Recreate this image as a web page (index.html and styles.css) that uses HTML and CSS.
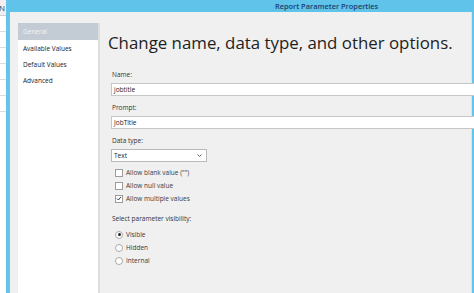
FILE: index.html
```html
<!DOCTYPE html>
<html lang="en">

<head>
    <meta charset="UTF-8">
    <meta name="viewport" content="width=device-width, initial-scale=1.0">
    <title>Report Parameter Properties</title>
    <link rel="stylesheet" href="styles.css">
</head>

<body>
    <div class="screen">
        <!-- window behind the dialog -->
        <div class="behind">
            <div class="behind-top">N</div>
            <div class="behind-row"></div>
            <div class="behind-row"></div>
            <div class="behind-row"></div>
            <div class="behind-row"></div>
            <div class="behind-row"></div>
            <div class="behind-row"></div>
        </div>

        <div class="window">
            <div class="titlebar">Report Parameter Properties</div>
            <div class="client">
                <ul class="nav">
                    <li class="active">General</li>
                    <li>Available Values</li>
                    <li>Default Values</li>
                    <li>Advanced</li>
                </ul>

                <div class="page">
                    <h1>Change name, data type, and other options.</h1>

                    <div class="field-label">Name:</div>
                    <div class="textbox">jobtitle</div>

                    <div class="field-label">Prompt:</div>
                    <div class="textbox">JobTitle</div>

                    <div class="field-label">Data type:</div>
                    <div class="select">
                        <span>Text</span>
                        <svg class="chevron" width="5" height="3" viewBox="0 0 5 3">
                            <path d="M0.5 0.5 L2.5 2.5 L4.5 0.5" fill="none" stroke="#555" stroke-width="0.9" />
                        </svg>
                    </div>

                    <div class="options">
                        <div class="option"><span class="checkbox"></span>Allow blank value ("")</div>
                        <div class="option"><span class="checkbox"></span>Allow null value</div>
                        <div class="option">
                            <span class="checkbox">
                                <svg width="7" height="7" viewBox="0 0 7 7">
                                    <path d="M1.2 3.6 L2.8 5.2 L5.8 1.6" fill="none" stroke="#222" stroke-width="1.1" />
                                </svg>
                            </span>Allow multiple values
                        </div>
                    </div>

                    <div class="field-label visibility">Select parameter visibility:</div>
                    <div class="options radios">
                        <div class="option"><span class="radio checked"></span>Visible</div>
                        <div class="option"><span class="radio"></span>Hidden</div>
                        <div class="option"><span class="radio"></span>Internal</div>
                    </div>
                </div>
            </div>
        </div>
    </div>
</body>

</html>
```

FILE: styles.css
```css
html,
body {
    margin: 0;
    height: 100%;
    overflow: hidden;
}

body {
    font-family: "Open Sans", "Noto Sans", sans-serif;
    background-color: #f0f0f0;
}

.screen {
    display: flex;
    height: 293px;
    width: 474px;
}

/* strip of the window lying behind */
.behind {
    width: 6px;
    flex-shrink: 0;
    background: #ffffff;
    overflow: hidden;
}

.behind-top {
    height: 15px;
    background: #f4eef2;
    color: #333;
    font-size: 8px;
    line-height: 15px;
    text-indent: -1px;
    border-bottom: 1px solid #d0d0d0;
}

.behind-row {
    height: 15px;
    border-bottom: 1px solid #dcdcdc;
}

.window {
    flex: 1;
    display: flex;
    flex-direction: column;
    background: #63c5ea;
}

.titlebar {
    height: 12px;
    line-height: 12px;
    padding-left: 269px;
    font-size: 7.4px;
    font-weight: 600;
    color: #1d3f6f;
    background: #5fc3ea;
}

.client {
    flex: 1;
    display: flex;
    margin-left: 4px;
    background: #f0f0f0;
    border-right: 1px solid #e2e2e2;
    margin-right: 2px;
}

.nav {
    list-style: none;
    margin: 11px 0 0 8px;
    padding: 0;
    width: 80px;
    background: #ffffff;
    border-right: 2px solid #dedede;
}

.nav li {
    height: 16px;
    line-height: 16px;
    padding-left: 5px;
    font-size: 6.5px;
    color: #222;
}

.nav li.active {
    height: 17px;
    line-height: 18px;
    margin-bottom: 1px;
    background: #c3cbd5;
    color: #f4f6f8;
}

.page {
    flex: 1;
    padding: 19px 0 0 8px;
    color: #333;
    font-size: 6.5px;
}

h1 {
    margin: 0;
    height: 24px;
    line-height: 24px;
    font-size: 16.85px;
    font-weight: 400;
    color: #1e1e1e;
    white-space: nowrap;
}

.field-label {
    height: 12px;
    line-height: 12px;
    margin: 6px 0 2px 4px;
}

h1 + .field-label {
    margin-top: 14px;
}

.textbox {
    height: 11px;
    line-height: 11px;
    margin-left: 3px;
    margin-right: -5px;
    padding-left: 2px;
    background: #ffffff;
    border: 1px solid #c6c6c6;
    border-right: none;
    color: #222;
}

.select {
    display: flex;
    align-items: center;
    justify-content: space-between;
    width: 88px;
    height: 11px;
    margin: 2px 0 0 3px;
    padding: 0 4px 0 2px;
    background: #ffffff;
    border: 1px solid #b9b9b9;
    color: #222;
}

.chevron {
    display: block;
}

.options {
    margin: 4px 0 0 7px;
}

.option {
    display: flex;
    align-items: center;
    height: 13px;
    color: #3a3a3a;
}

.checkbox {
    display: flex;
    align-items: center;
    justify-content: center;
    width: 6px;
    height: 6px;
    margin-right: 3px;
    background: #ffffff;
    border: 1px solid #9c9c9c;
}

.field-label.visibility {
    margin-top: 8px;
    margin-bottom: 0;
}

.radios {
    margin-top: 3px;
}

.radio {
    position: relative;
    width: 6px;
    height: 6px;
    margin-right: 3px;
    background: #ffffff;
    border: 1px solid #a8a8a8;
    border-radius: 50%;
}

.radio.checked::after {
    content: "";
    position: absolute;
    left: 1.5px;
    top: 1.5px;
    width: 3px;
    height: 3px;
    border-radius: 50%;
    background: #222;
}
```
